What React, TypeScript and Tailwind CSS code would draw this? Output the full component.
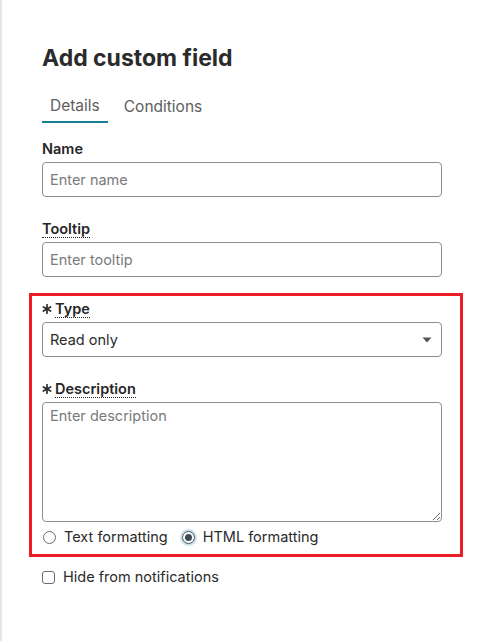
const font = { fontFamily: "Inter, 'Noto Sans', sans-serif" };

function Req() {
  return (
    <svg width="10" height="10" viewBox="0 0 10 10" className="mr-[3px] shrink-0" aria-hidden>
      <g stroke="#2b2b2b" strokeWidth="1.7" strokeLinecap="round">
        <line x1="5" y1="0.8" x2="5" y2="9.2" />
        <line x1="1.4" y1="2.9" x2="8.6" y2="7.1" />
        <line x1="1.4" y1="7.1" x2="8.6" y2="2.9" />
      </g>
    </svg>
  );
}

function Label({
  text,
  dotted = false,
  required = false,
}: {
  text: string;
  dotted?: boolean;
  required?: boolean;
}) {
  return (
    <div className="flex h-5 items-center text-[14.5px] font-semibold text-[#262626]">
      {required ? <Req /> : null}
      <span className={dotted ? "border-b border-dotted border-[#262626] leading-[17px]" : "leading-5"}>
        {text}
      </span>
    </div>
  );
}

function TextInput({ placeholder }: { placeholder: string }) {
  return (
    <input
      placeholder={placeholder}
      className="mt-[3px] h-[35px] w-full rounded-[4px] border border-[#8d8d8d] bg-white px-[7px] text-[14.5px] text-[#2b2b2b] outline-none placeholder:text-[#7a7a7a]"
      style={font}
    />
  );
}

export default function App() {
  return (
    <div className="min-h-[641px] w-[480px] border-l-2 border-[#e6e6e6] bg-white" style={font}>
      <div className="w-[440px] pl-[40px]">
        <h1 className="pt-[42px] text-[23px] font-bold leading-8 text-[#2b2b2b]">Add custom field</h1>

        <div className="mt-[17px] flex gap-4 text-[15.5px]">
          <div className="flex h-8 items-center border-b-2 border-[#167f93] px-2 text-[#5e5e5e]">Details</div>
          <div className="flex h-8 items-center text-[#5e5e5e]">Conditions</div>
        </div>

        <div className="mt-4">
          <Label text="Name" />
          <TextInput placeholder="Enter name" />
        </div>

        <div className="mt-[22px]">
          <Label text="Tooltip" dotted />
          <TextInput placeholder="Enter tooltip" />
        </div>

        <div className="-ml-[13px] -mr-[21px] mt-4 border-[3px] border-[#ec1c24] pb-[7px] pl-[10px] pr-[18px] pt-[3px]">
          <Label text="Type" dotted required />
          <div className="relative mt-[3px] flex h-[35px] w-full items-center rounded-[4px] border border-[#8d8d8d] px-[7px] text-[14.5px] text-[#2b2b2b]">
            Read only
            <svg width="10" height="6" viewBox="0 0 10 6" className="absolute right-[9px] top-[14px]" aria-hidden>
              <path d="M0.5 0.5h9L5 5.5z" fill="#555" />
            </svg>
          </div>

          <div className="mt-[22px]">
            <Label text="Description" dotted required />
            <textarea
              placeholder="Enter description"
              className="mt-[3px] block h-[120px] w-full rounded-[4px] border border-[#8d8d8d] px-[7px] py-[2px] text-[14.5px] text-[#2b2b2b] outline-none placeholder:text-[#7a7a7a]"
              style={font}
            />
          </div>

          <div className="mt-[5px] flex h-5 items-center text-[14.5px] text-[#2b2b2b]">
            <span className="ml-px h-[13px] w-[13px] rounded-full border border-[#6b6b6b] bg-white" />
            <span className="ml-2">Text formatting</span>
            <span className="ml-[14px] flex h-[13px] w-[13px] items-center justify-center rounded-full border border-[#3d5660] bg-white shadow-[0_0_0_2px_#cfe3ea]">
              <span className="h-[7px] w-[7px] rounded-full bg-[#3d4a50]" />
            </span>
            <span className="ml-2">HTML formatting</span>
          </div>
        </div>

        <div className="mt-[10px] flex h-5 items-center text-[14.5px] text-[#2b2b2b]">
          <span className="h-[13px] w-[13px] rounded-[3px] border border-[#6b6b6b] bg-white" />
          <span className="ml-2">Hide from notifications</span>
        </div>
      </div>
    </div>
  );
}
